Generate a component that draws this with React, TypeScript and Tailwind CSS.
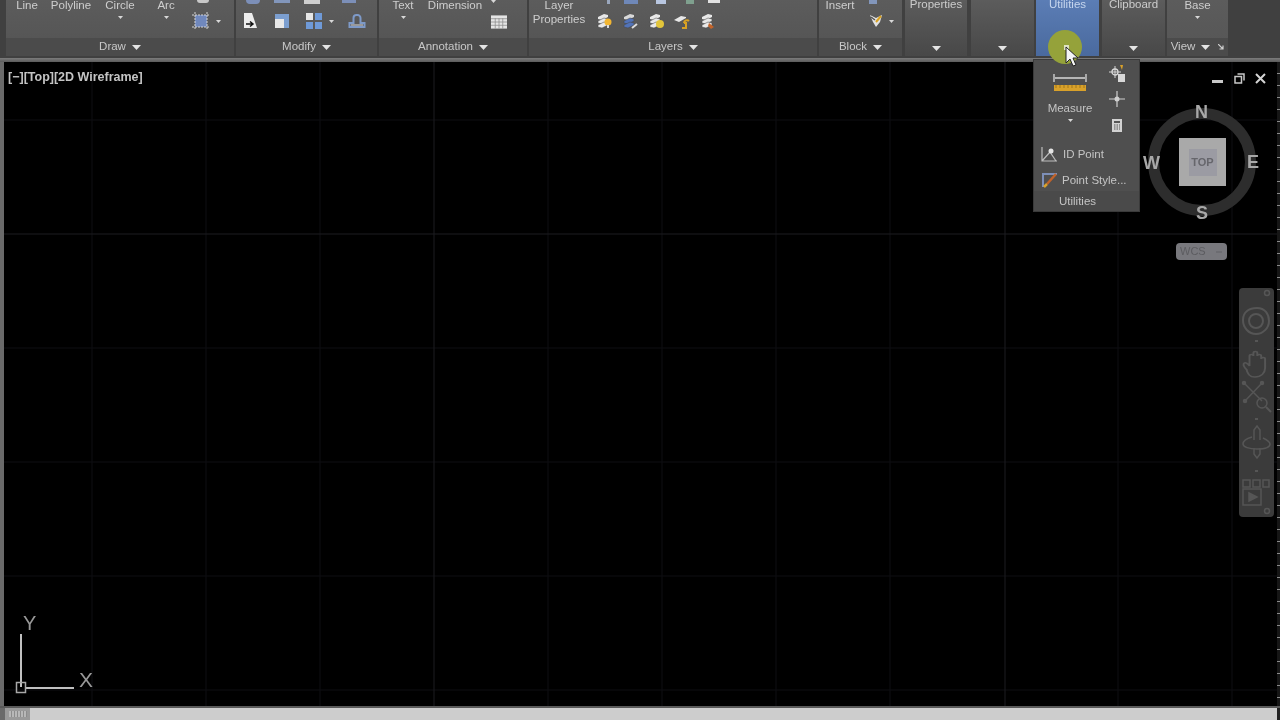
import type { ReactNode } from 'react';

const FONT = 'font-["Liberation_Sans",Arial,sans-serif]';

function Caret({ className = '' }: { className?: string }) {
  return (
    <svg width="9" height="5" viewBox="0 0 9 5" className={`shrink-0 ${className}`}>
      <path d="M0 0h9L4.5 5z" fill="#e4e4e4" />
    </svg>
  );
}

function TinyCaret({ className = '' }: { className?: string }) {
  return (
    <svg width="5" height="3" viewBox="0 0 5 3" className={`shrink-0 ${className}`}>
      <path d="M0 0h5L2.5 3z" fill="#d8d8d8" />
    </svg>
  );
}

function PanelTitle({ title, extra }: { title: string; extra?: ReactNode }) {
  return (
    <div className="h-[18px] shrink-0 bg-[#4b4b4b] flex items-center justify-center gap-[6px] text-[11.5px] text-[#c8c8c8]">
      <span>{title}</span>
      <Caret />
      {extra}
    </div>
  );
}

function Panel({ width, title, children }: { width: string; title: string; children: ReactNode }) {
  return (
    <div className={`${width} h-[56px] shrink-0 flex flex-col overflow-hidden bg-gradient-to-b from-[#5c5c5c] to-[#535353]`}>
      <div className="h-[38px] flex relative">{children}</div>
      <PanelTitle title={title} />
    </div>
  );
}

function Collapsed({ width, label, active }: { width: string; label?: string; active?: boolean }) {
  return (
    <div
      className={`${width} h-[56px] shrink-0 flex flex-col items-center justify-between overflow-hidden pb-[5px] bg-gradient-to-b ${
        active ? 'from-[#5b7db5] to-[#4a6a9e]' : 'from-[#5c5c5c] to-[#484848]'
      }`}
    >
      <span className={`text-[11.5px] leading-[9px] ${active ? 'text-[#c6d6ee]' : 'text-[#cccccc]'}`}>{label}</span>
      <Caret />
    </div>
  );
}

function ToolLabel({ width, label, caret }: { width: string; label: string; caret?: boolean }) {
  return (
    <div className={`${width} shrink-0 flex flex-col items-center gap-[5px] text-[11.5px] leading-[11px] text-[#cecece]`}>
      <span>{label}</span>
      {caret && <TinyCaret />}
    </div>
  );
}

function Icon({ d, children }: { d?: string; children?: ReactNode }) {
  return (
    <svg width="18" height="18" viewBox="0 0 18 18" className="shrink-0">
      {d && <path d={d} fill="#d8d8d8" />}
      {children}
    </svg>
  );
}

function LayerIcon({ accent, top = '#e8e8e8', mid = '#e8e8e8' }: { accent: ReactNode; top?: string; mid?: string }) {
  return (
    <Icon>
      <path d="M3 5l6-3 4 1v2l-6 3-4-1z" fill={top} />
      <path d="M3 9l6-3 4 1v2l-6 3-4-1z" fill={mid} stroke="#444" strokeWidth=".5" />
      <path d="M3 13l6-3 4 1v2l-6 3-4-1z" fill={mid} stroke="#444" strokeWidth=".5" />
      {accent}
    </Icon>
  );
}

function DrawPanel() {
  return (
    <Panel width="w-[228px]" title="Draw">
      <ToolLabel width="w-[42px]" label="Line" />
      <ToolLabel width="w-[46px]" label="Polyline" />
      <ToolLabel width="w-[52px]" label="Circle" caret />
      <ToolLabel width="w-[40px]" label="Arc" caret />
      <div className="flex flex-col w-[48px]">
        <div className="h-[5px] overflow-hidden pl-[11px]">
          <div className="w-[12px] h-[3px] rounded-b-full bg-[#c8c8c8]" />
        </div>
        <div className="flex items-center mt-[7px] pl-[6px] gap-[6px]">
          <Icon>
            <rect x="3" y="3" width="12" height="12" fill="#7088bd" />
            <path d="M3 0v18M15 0v18M0 3h18M0 15h18" stroke="#d5d5d5" strokeWidth="1" strokeDasharray="2 1" />
          </Icon>
          <TinyCaret />
        </div>
      </div>
    </Panel>
  );
}

function ModifyPanel() {
  return (
    <Panel width="w-[141px]" title="Modify">
      <div className="flex flex-col w-full">
        <div className="h-[5px] overflow-hidden flex pl-[10px] gap-[14px]">
          <div className="w-[14px] h-[4px] rounded-b-full bg-[#7c8fb8]" />
          <div className="w-[16px] h-[3px] bg-[#8296bb]" />
          <div className="w-[16px] h-[4px] bg-[#cfcfcf]" />
          <div className="w-[14px] h-[3px] ml-[8px] bg-[#7c8fb8]" />
        </div>
        <div className="flex items-center mt-[7px] pl-[5px]">
          <Icon>
            <path d="M3 1h8l5 15H3z" fill="#ededed" />
            <path d="M5 12h7M9 9.500l3 2.500-3 2.500" stroke="#111" strokeWidth="1.500" fill="none" />
          </Icon>
          <div className="w-[14px]" />
          <Icon>
            <path d="M2 2h14v14H2z" fill="#7c9fd0" />
            <path d="M2 7h9v9H2z" fill="#e8e8e8" />
          </Icon>
          <div className="w-[14px]" />
          <Icon>
            <rect x="1" y="1" width="7" height="7" fill="#e6e6e6" />
            <rect x="10" y="1" width="7" height="7" fill="#6f9ad8" />
            <rect x="1" y="10" width="7" height="7" fill="#6f9ad8" />
            <rect x="10" y="10" width="7" height="7" fill="#6f9ad8" />
          </Icon>
          <TinyCaret className="ml-[6px]" />
          <div className="w-[14px]" />
          <Icon>
            <path d="M1.500 15v-4h4V6a3 3 0 0 1 3-3h1a3 3 0 0 1 3 3v5h4v4z" fill="none" stroke="#7e9ac8" strokeWidth="2" />
            <path d="M3 13h12" stroke="#ddd" strokeWidth="1" />
          </Icon>
        </div>
      </div>
    </Panel>
  );
}

function AnnotationPanel() {
  return (
    <Panel width="w-[148px]" title="Annotation">
      <ToolLabel width="w-[48px]" label="Text" caret />
      <ToolLabel width="w-[56px]" label="Dimension" />
      <div className="flex flex-col items-start pl-[2px]">
        <TinyCaret className="ml-[6px]" />
        <svg width="16" height="14" viewBox="0 0 17 14" className="mt-[12px] ml-[6px]">
          <rect width="17" height="14" fill="#e4e4e4" />
          <path d="M0 3.500h17M0 7h17M0 10.500h17M4.500 3v11M8.500 3v11M12.500 3v11" stroke="#8a8a8a" strokeWidth=".8" />
        </svg>
      </div>
    </Panel>
  );
}

function LayersPanel() {
  return (
    <Panel width="w-[288px]" title="Layers">
      <div className="w-[60px] shrink-0 text-center text-[11.5px] text-[#cecece]">
        <div className="leading-[11px]">Layer</div>
        <div className="leading-[12px] mt-[2px]">Properties</div>
      </div>
      <div className="flex flex-col">
        <div className="h-[5px] overflow-hidden flex pl-[18px] gap-[14px]">
          <div className="w-[3px] h-[4px] bg-[#9aa7bd]" />
          <div className="w-[14px] h-[4px] bg-[#6f88b8]" />
          <div className="w-[10px] h-[4px] ml-[4px] bg-[#b8c6e0]" />
          <div className="w-[8px] h-[4px] ml-[6px] bg-[#7fa08e]" />
          <div className="w-[12px] h-[3px] bg-[#e2e2e2]" />
        </div>
        <div className="flex items-center mt-[7px] pl-[6px] gap-[8px]">
          <LayerIcon accent={<><circle cx="13" cy="10" r="3.500" fill="#f2b632" /><rect x="12" y="13" width="2" height="3" fill="#ddd" /></>} />
          <LayerIcon
            top="#d8d8d8"
            mid="#5273b8"
            accent={<path d="M11 16l5-4" stroke="#ddd" strokeWidth="2" />}
          />
          <LayerIcon accent={<circle cx="13" cy="12" r="4" fill="#e2c53a" />} />
          <Icon>
            <path d="M1 8l7-4 5 1v1l-7 4z" fill="#e8e8e8" />
            <path d="M9 16h4v-5h-2M11 11a3 3 0 0 1 5-2" stroke="#d9a223" strokeWidth="2" fill="none" />
          </Icon>
          <LayerIcon accent={<path d="M10 11l5 4-3 2-3-3z" fill="#c4642a" />} />
        </div>
      </div>
    </Panel>
  );
}

function BlockPanel() {
  return (
    <Panel width="w-[83px]" title="Block">
      <ToolLabel width="w-[42px]" label="Insert" />
      <div className="flex flex-col">
        <div className="h-[4px] ml-[8px] w-[8px] bg-[#8296bb]" />
        <div className="flex items-center mt-[8px] pl-[6px] gap-[4px]">
          <Icon>
            <path d="M3 3l6 3 6-3-2 7-4 5-3-5z" fill="#e2e2e2" />
            <path d="M9 10l5-6" stroke="#d9a223" strokeWidth="2" />
            <path d="M4 5l4 3" stroke="#555" strokeWidth="1.500" />
          </Icon>
          <TinyCaret />
        </div>
      </div>
    </Panel>
  );
}

function ViewPanel() {
  return (
    <div className="w-[61px] h-[56px] shrink-0 flex flex-col bg-gradient-to-b from-[#5c5c5c] to-[#555555] overflow-hidden">
      <div className="h-[38px] flex flex-col items-center gap-[5px] text-[11.5px] leading-[11px] text-[#cecece]">
        <span>Base</span>
        <TinyCaret />
      </div>
      <PanelTitle
        title="View"
        extra={
          <svg width="6" height="6" viewBox="0 0 6 6" className="ml-[2px]">
            <path d="M0 0l5 5M5 1.500V5H1.500" stroke="#d0d0d0" strokeWidth="1.200" fill="none" />
          </svg>
        }
      />
    </div>
  );
}

function Ribbon() {
  return (
    <div className="h-[58px] shrink-0 flex gap-[2px] pl-[6px] pr-[4px] bg-[#404040]">
      <DrawPanel />
      <ModifyPanel />
      <AnnotationPanel />
      <LayersPanel />
      <BlockPanel />
      <Collapsed width="w-[62px] ml-[1px]" label="Properties" />
      <Collapsed width="w-[63px] ml-[2px]" />
      <Collapsed width="w-[63px]" label="Utilities" active />
      <Collapsed width="w-[63px] ml-[1px]" label="Clipboard" />
      <ViewPanel />
    </div>
  );
}

function CanvasGrid() {
  const minorX = [92, 206, 320, 548, 662, 776, 890, 1118, 1232];
  const majorX = [434, 1005];
  const minorY = [120, 348, 462, 576, 690];
  return (
    <svg className="absolute inset-0 w-full h-full" viewBox="4 62 1273 644">
      {minorX.map((x) => (
        <line key={x} x1={x} x2={x} y1="62" y2="706" stroke="#0f0f12" />
      ))}
      {minorY.map((y) => (
        <line key={y} x1="4" x2="1277" y1={y} y2={y} stroke="#0f0f12" />
      ))}
      {majorX.map((x) => (
        <line key={x} x1={x} x2={x} y1="62" y2="706" stroke="#1c1c20" />
      ))}
      <line x1="4" x2="1277" y1="234" y2="234" stroke="#1c1c20" />
    </svg>
  );
}

function WindowControls() {
  return (
    <div className="absolute left-[1208px] top-[11px] flex items-center gap-[11px]">
      <div className="w-[11px] h-[3px] mt-[5px] bg-[#c8c8c8]" />
      <svg width="11" height="11" viewBox="0 0 11 11">
        <path d="M3.500 1h6.500v6.500M1 3.500h6.500V10H1z" fill="none" stroke="#c8c8c8" strokeWidth="1.500" />
      </svg>
      <svg width="11" height="11" viewBox="0 0 11 11" className="-ml-[1px]">
        <path d="M1 1l9 9M10 1l-9 9" stroke="#d4d4d4" strokeWidth="2" />
      </svg>
    </div>
  );
}

function Compass() {
  return (
    <div className="absolute left-[1136px] top-[40px] w-[124px] h-[124px] font-bold text-[18px] leading-none text-[#a8a8a8]">
      <div className="absolute left-[8px] top-[6px] w-[108px] h-[108px] rounded-full border-[11px] border-[#2d2d2d]" />
      <div className="absolute left-[39px] top-[36px] w-[47px] h-[48px] bg-[#a9a9a9] flex items-center justify-center">
        <div className="w-[28px] h-[27px] bg-[#9b9ba3] flex items-center justify-center text-[11px] text-[#66666c]">TOP</div>
      </div>
      <span className="absolute left-[55px] top-[1px]">N</span>
      <span className="absolute left-[56px] top-[102px]">S</span>
      <span className="absolute left-[3px] top-[52px]">W</span>
      <span className="absolute left-[107px] top-[51px]">E</span>
    </div>
  );
}

function NavBar() {
  return (
    <div className="absolute left-[1235px] top-[226px] w-[35px] h-[229px] rounded-[4px] bg-[#3b3b3b] flex flex-col items-center">
      <svg width="35" height="229" viewBox="0 0 35 229" fill="none" stroke="#565656" strokeWidth="1.500">
        <circle cx="28" cy="5" r="2.500" />
        <path d="M18 20c8 0 12 6 12 13s-6 13-13 13S4 40 4 32s6-12 14-12z" strokeWidth="2" />
        <circle cx="17" cy="33" r="7" strokeWidth="2" />
        <path d="M16 53h3" strokeWidth="2" />
        <path
          transform="translate(-2.500,2) scale(1.300,1)"
          d="M8 80c-3-4-3-6-2-7s3 1 4 3V66c0-2 3-2 3 0v-3c0-2 3-2 3 0v3c0-2 3-2 3 0v3c0-2 3-2 3 0v9c0 5-3 9-8 9-4 0-5-3-6-6z"
          strokeWidth="1.500"
        />
        <path d="M5 95l18 18M23 95L6 113" />
        <circle cx="5" cy="95" r="1.500" fill="#565656" />
        <circle cx="23" cy="95" r="1.500" fill="#565656" />
        <circle cx="6" cy="113" r="1.500" fill="#565656" />
        <circle cx="23" cy="115" r="5" />
        <path d="M27 119l5 5" strokeWidth="2" />
        <path d="M16 131h3" strokeWidth="2" />
        <path d="M15 152v-10l3-4 3 4v10M15 160v6l3 4 3-4v-6" />
        <path d="M13 149c-7 2-9 5-9 7 0 3 6 5 14 5s13-2 13-5c0-2-3-4-7-6" />
        <path d="M16 183h3" strokeWidth="2" />
        <rect x="4" y="192" width="7" height="7" />
        <rect x="14" y="192" width="7" height="7" />
        <rect x="24" y="192" width="6" height="7" />
        <rect x="4" y="201" width="18" height="16" />
        <path d="M10 205l8 4-8 4z" fill="#565656" />
        <circle cx="28" cy="223" r="2.500" />
      </svg>
    </div>
  );
}

function UcsIcon() {
  return (
    <svg className="absolute left-[10px] top-[549px]" width="92" height="84" viewBox="0 0 92 84">
      <path d="M7 23v53M12 77h48" stroke="#c0c0c0" strokeWidth="2" fill="none" />
      <rect x="2.500" y="71.500" width="9" height="10" stroke="#a8a8a8" strokeWidth="1.500" fill="none" />
      <text x="9" y="19" fontSize="20" fill="#989898" fontFamily="Liberation Sans">Y</text>
      <text x="65" y="76" fontSize="21" fill="#989898" fontFamily="Liberation Sans">X</text>
    </svg>
  );
}

function Flyout() {
  return (
    <div className="absolute left-[1030px] top-[-2px] w-[105px] h-[151px] bg-[#4f4f4f] flex flex-col text-[11.5px] leading-[14px] text-[#c4c4c4] shadow-[0_0_0_1px_#3a3a3a]">
      <div className="flex flex-1 pt-[4px]">
        <div className="w-[72px] flex flex-col items-center">
          <svg width="34" height="22" viewBox="0 0 34 22" className="mt-[6px]">
            <path d="M1 4v8M33 4v8M2 8h30" stroke="#d8d8d8" strokeWidth="1.300" fill="none" />
            <rect x="1" y="15" width="32" height="6" fill="#d9a12a" />
            <path d="M3 15v3M7 15v3M11 15v3M15 15v3M19 15v3M23 15v3M27 15v3M31 15v3" stroke="#8a6414" strokeWidth=".7" />
          </svg>
          <span className="mt-[9px]">Measure</span>
          <TinyCaret className="mt-[4px]" />
        </div>
        <div className="flex flex-col items-center gap-[8px] pl-[2px]">
          <Icon>
            <circle cx="7" cy="8" r="3" fill="none" stroke="#d8d8d8" strokeWidth="1.300" />
            <path d="M7 2v12M1 8h12" stroke="#d8d8d8" />
            <rect x="10" y="10" width="7" height="8" fill="#d8d8d8" />
            <path d="M12 1l3 0-1 5z" fill="#d9a12a" />
          </Icon>
          <Icon>
            <path d="M9 1v16M1 9h16" stroke="#cfcfcf" strokeWidth="1.200" />
            <circle cx="9" cy="9" r="2.500" fill="#cfcfcf" />
          </Icon>
          <Icon>
            <rect x="4" y="3" width="10" height="13" fill="#d2d2d2" />
            <rect x="6" y="5" width="6" height="2" fill="#555" />
            <path d="M6 9h6M6 11h6M6 13h6" stroke="#555" strokeDasharray="1.500 1" />
          </Icon>
        </div>
      </div>
      <div className="flex items-center gap-[5px] pl-[6px] h-[26px] pb-[4px]">
        <Icon>
          <path d="M2 2v14h15M2 16L10 7l6 9" fill="none" stroke="#bdbdbd" strokeWidth="1.200" />
          <circle cx="11" cy="6" r="2.500" fill="#e4e4e4" />
        </Icon>
        <span>ID Point</span>
      </div>
      <div className="flex items-center gap-[3px] pl-[7px] h-[22px] whitespace-nowrap">
        <Icon>
          <path d="M2 16V3h14" fill="none" stroke="#7d8fb8" strokeWidth="2" />
          <path d="M15 3L6 13" stroke="#c0622a" strokeWidth="2.500" />
          <path d="M3 16l3-3" stroke="#d9a12a" strokeWidth="2.500" />
        </Icon>
        <span>Point Style...</span>
      </div>
      <div className="h-[20px] shrink-0 bg-[#4a4a4a] flex items-center pl-[25px]">Utilities</div>
    </div>
  );
}

function Cursor() {
  return (
    <>
      <div className="absolute left-[1044px] top-[-32px] w-[34px] h-[34px] rounded-full bg-[#95a23a]" />
      <div className="absolute left-[1060px] top-[-17px] w-[5px] h-[5px] bg-[#dfe3c4]" />
      <svg className="absolute left-[1061px] top-[-16px]" width="15" height="22" viewBox="0 0 15 22">
        <path d="M1 1v16l4-4 3 7 3-1-3-7h5z" fill="#f4f4f4" stroke="#222" strokeWidth="1" />
      </svg>
    </>
  );
}

export default function App() {
  return (
    <div className={`${FONT} w-[1280px] h-[720px] overflow-hidden flex flex-col bg-[#404040] blur-[0.5px]`}>
      <Ribbon />
      <div className="h-[4px] shrink-0 bg-gradient-to-b from-[#7c7c7c] to-[#5c5c5c]" />
      <div className="flex-1 flex min-h-0">
        <div className="w-[4px] shrink-0 bg-[#6a6a6a]" />
        <div className="flex-1 relative bg-black">
          <CanvasGrid />
          <span className="absolute left-[4px] top-[8px] text-[12.5px] font-bold leading-[14px] text-[#c4c4c4]">[−][Top][2D Wireframe]</span>
          <WindowControls />
          <Compass />
          <div className="absolute left-[1172px] top-[181px] w-[51px] h-[17px] rounded-[4px] bg-[#78787d] flex items-center pl-[4px] text-[11px] text-[#5c5c60]">
            <span>WCS</span>
            <div className="ml-auto mr-[5px] w-[6px] h-[2px] bg-[#6c6c71]" />
          </div>
          <NavBar />
          <UcsIcon />
          <Flyout />
          <Cursor />
        </div>
        <div className="w-[3px] shrink-0 bg-[repeating-linear-gradient(180deg,#161616_0,#161616_11px,#8a8a8a_11px,#8a8a8a_12px)]" />
      </div>
      <div className="h-[14px] shrink-0 flex border-t-2 border-[#5a5a5a] bg-[#cdcdcd]">
        <div className="w-[5px] shrink-0 bg-[#6a6a6a]" />
        <div className="w-[25px] shrink-0 bg-[#9a9a9a] flex items-center justify-center">
          <div className="w-[18px] h-[6px] bg-[repeating-linear-gradient(90deg,#b8b8b8_0,#b8b8b8_2px,#8c8c8c_2px,#8c8c8c_3px)]" />
        </div>
        <div className="flex-1" />
        <div className="w-[3px] shrink-0 bg-[#222222]" />
      </div>
    </div>
  );
}
